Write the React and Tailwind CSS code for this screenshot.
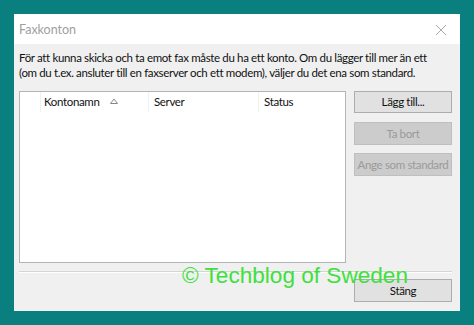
export default function App() {
  const font = { fontFamily: 'Lato, "Noto Sans", sans-serif' };
  return (
    <div className="relative w-[474px] h-[325px] bg-[#0a7f80] pt-[14px] pl-[14px]" style={font}>
      <div className="w-[446px] h-[297px] flex flex-col bg-[#f0f0f0]">
        <div className="h-[30px] bg-white flex items-center justify-between pl-[5px] pr-[10px] pt-[2px]">
          <span className="text-[12.5px] text-[#a0a0a0]">Faxkonton</span>
          <svg width="12" height="12" viewBox="0 0 12 12" className="mr-[3px]">
            <path d="M1 1L11 11M11 1L1 11" stroke="#a8a8a8" strokeWidth="1" />
          </svg>
        </div>
        <div className="flex-1 flex flex-col pl-[5px] pr-[8px] pt-[6px] tracking-[-0.35px]">
          <p className="text-[11.5px] leading-[15px] text-[#111] whitespace-nowrap">
            För att kunna skicka och ta emot fax måste du ha ett konto. Om du lägger till mer än ett
            <br />
            (om du t.ex. ansluter till en faxserver och ett modem), väljer du det ena som standard.
          </p>
          <div className="flex gap-[8px] mt-[11px]">
            <div className="w-[327px] h-[172px] bg-white border border-[#b4b4b4]">
              <div className="flex h-[20px] items-center text-[11.5px] text-[#111]">
                <div className="w-[21px] h-full border-r border-[#f0f0f0]" />
                <div className="w-[108px] h-full border-r border-[#f0f0f0] flex items-center pl-[3px] relative">
                  Kontonamn
                  <svg width="8" height="6" viewBox="0 0 8 6" className="absolute left-[69px] top-[6px]">
                    <path d="M0.5 5.5L4 1L7.5 5.5Z" stroke="#888" strokeWidth="1" fill="none" />
                  </svg>
                </div>
                <div className="w-[110px] h-full border-r border-[#f0f0f0] flex items-center pl-[5px]">Server</div>
                <div className="flex-1 h-full flex items-center pl-[5px]">Status</div>
              </div>
            </div>
            <div className="w-[98px] flex flex-col gap-[9px] text-[11.5px] whitespace-nowrap">
              <div className="h-[22px] flex items-center justify-center bg-[#e1e1e1] border border-[#adadad] text-[#111]">Lägg till...</div>
              <div className="h-[23px] flex items-center justify-center bg-[#cccccc] border border-[#bfbfbf] text-[#9a9a9a]">Ta bort</div>
              <div className="h-[23px] flex items-center justify-center bg-[#cccccc] border border-[#bfbfbf] text-[#9a9a9a] -mt-[1px]">Ange som standard</div>
            </div>
          </div>
          <div className="mt-[8px] h-[2px] border-t border-[#d5d5d5] border-b border-b-white" />
          <div className="flex justify-end mt-[6px]">
            <div className="w-[98px] h-[23px] flex items-center justify-center bg-[#e1e1e1] border border-[#adadad] text-[11.5px] text-[#111]">Stäng</div>
          </div>
        </div>
      </div>
      <div
        className="absolute left-[182px] top-[262px] text-[22.6px] leading-[28px] text-[#3ee03e]"
        style={{ fontFamily: '"Liberation Sans", Arial, sans-serif' }}
      >
        © Techblog of Sweden
      </div>
    </div>
  );
}
